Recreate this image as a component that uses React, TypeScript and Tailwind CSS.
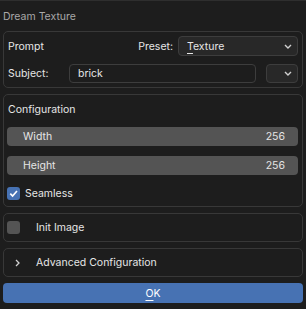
import React from "react";

const font = { fontFamily: "Inter, 'DejaVu Sans', sans-serif" };

function Chevron() {
  return (
    <svg viewBox="0 0 8 5" className="h-[5px] w-[8px]" fill="none" stroke="#d0d0d0" strokeWidth="1.4">
      <path d="M1 1l3 3 3-3" />
    </svg>
  );
}

function Checkbox({ checked }: { checked: boolean }) {
  return (
    <div
      className={
        "flex size-[13px] shrink-0 items-center justify-center rounded-[3px] " +
        (checked ? "bg-[#4772b3]" : "bg-[#545454]")
      }
    >
      {checked && (
        <svg viewBox="0 0 12 12" className="size-[11px]" fill="none" stroke="#fff" strokeWidth="1.8">
          <path d="M2.5 6.2l2.5 2.5 4.8-5.4" />
        </svg>
      )}
    </div>
  );
}

function Slider({ label, value }: { label: string; value: string }) {
  return (
    <div className="flex h-[19px] items-center justify-between rounded-[4px] bg-[#545454] pl-4 pr-[13px] text-[#e6e6e6]">
      <span>{label}</span>
      <span>{value}</span>
    </div>
  );
}

export default function App() {
  return (
    <div
      className="flex h-[309px] w-[306px] flex-col border-t border-[#2e2e2e] bg-[#1d1d1d] px-[3px] text-[10.5px] leading-[13px] text-[#e6e6e6]"
      style={font}
    >
      <div className="flex h-[30px] items-center text-[#a8a8a8]">Dream Texture</div>

      <div className="flex flex-col gap-2 rounded-[5px] border border-[#383838] py-[4px] pl-[4px] pr-[4px]">
        <div className="flex h-5 items-center justify-between">
          <span>Prompt</span>
          <div className="flex items-center gap-[5px]">
            <span>Preset:</span>
            <div className="flex h-5 w-[120px] items-center justify-between rounded-[4px] border border-[#3d3d3d] bg-[#282828] pl-2 pr-[5px]">
              <span>
                <span className="underline decoration-1 underline-offset-[3px]">T</span>exture
              </span>
              <Chevron />
            </div>
          </div>
        </div>
        <div className="flex h-[19px] items-center">
          <span className="w-[61px]">Subject:</span>
          <div className="flex h-[19px] w-[187px] items-center rounded-[4px] border border-[#3d3d3d] bg-[#1d1d1d] pl-2">
            brick
          </div>
          <div className="ml-[10px] flex h-[19px] flex-1 items-center justify-end rounded-[4px] border border-[#3d3d3d] bg-[#282828] pr-[5px]">
            <Chevron />
          </div>
        </div>
      </div>

      <div className="mt-[6px] flex flex-col rounded-[5px] border border-[#383838] pb-[6px] pl-[3px] pr-[4px] pt-[4px]">
        <div className="flex h-5 items-center pl-[1px]">Configuration</div>
        <div className="mt-[8px] flex flex-col gap-[10px]">
          <Slider label="Width" value="256" />
          <Slider label="Height" value="256" />
        </div>
        <div className="mt-[12px] flex h-[13px] items-center gap-[5px]">
          <Checkbox checked />
          <span>Seamless</span>
        </div>
      </div>

      <div className="mt-[6px] flex h-[29px] items-center rounded-[5px] border border-[#383838] pl-[3px]">
        <Checkbox checked={false} />
        <span className="ml-4">Init Image</span>
      </div>

      <div className="mt-[6px] flex h-[29px] items-center rounded-[5px] border border-[#383838] pl-[11px]">
        <svg viewBox="0 0 5 8" className="h-[8px] w-[5px]" fill="none" stroke="#d0d0d0" strokeWidth="1.3">
          <path d="M1 1l3 3-3 3" />
        </svg>
        <span className="ml-[16px]">Advanced Configuration</span>
      </div>

      <div className="mt-[6px] flex h-5 items-center justify-center rounded-[4px] bg-[#4772b3] text-white">
        <span>
          <span className="underline decoration-1 underline-offset-[3px]">O</span>K
        </span>
      </div>
    </div>
  );
}
